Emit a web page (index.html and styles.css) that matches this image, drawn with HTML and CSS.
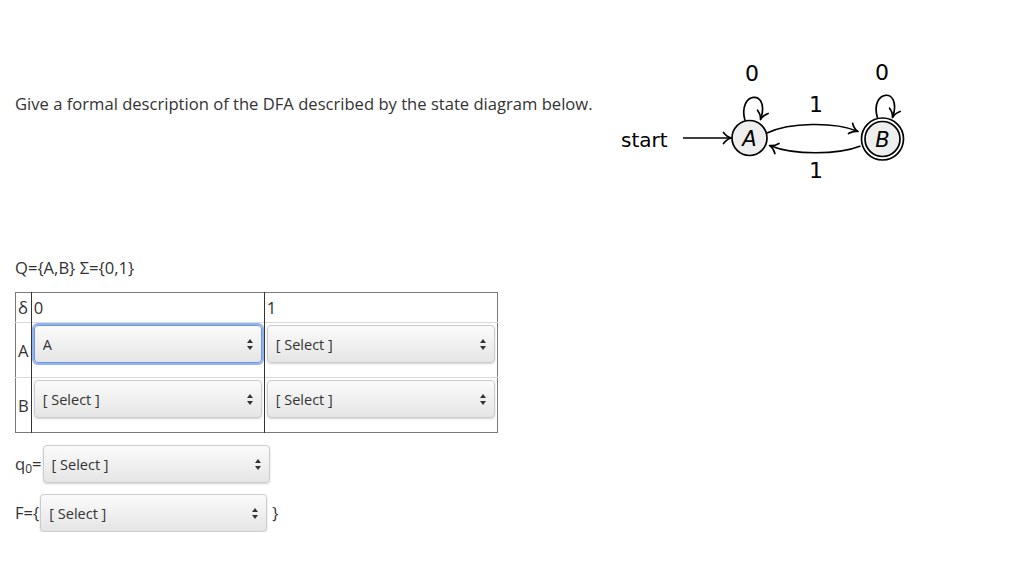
FILE: index.html
```html
<!DOCTYPE html>
<html lang="en">
<head>
<meta charset="utf-8">
<title>DFA formal description</title>
<link rel="stylesheet" href="styles.css">
</head>
<body>
<div class="page">
  <div class="intro">
    <p class="prompt">Give a formal description of the DFA described by the state diagram below.</p>
    <svg class="diagram" viewBox="612 55 300 135" width="300" height="135" xmlns="http://www.w3.org/2000/svg">
      <defs>
        <path id="tip" d="M-8 -5.5 C-5.5 -2.2 -2.6 -0.5 0 0 C-2.6 0.5 -5.5 2.2 -8 5.5" fill="none" stroke="#000" stroke-width="1.7" stroke-linecap="round" stroke-linejoin="round"/>
      </defs>
      <g class="dg-text">
        <text x="621" y="147">start</text>
      </g>
      <g class="dg-num">
        <text x="752" y="81" text-anchor="middle">0</text>
        <text x="882" y="80" text-anchor="middle">0</text>
        <text x="816" y="112" text-anchor="middle">1</text>
        <text x="816" y="178" text-anchor="middle">1</text>
      </g>
      <g fill="none" stroke="#000" stroke-width="1.7">
        <line x1="683" y1="138" x2="730.5" y2="138"/>
        <circle cx="749.5" cy="138" r="17.5" fill="#eeeeee"/>
        <circle cx="882.5" cy="139" r="21"/>
        <circle cx="882.5" cy="139" r="17.5" fill="#eeeeee"/>
        <path d="M745 120.5 C737 92 770 88 761 118.5"/>
        <path d="M877.5 118 C869 90 902 86 893 116.5"/>
        <path d="M767 133 C790 122 835 122 857 131"/>
        <path d="M860.5 146 C838 155 793 155 771 146"/>
      </g>
      <use href="#tip" transform="translate(731.5 138)"/>
      <use href="#tip" transform="translate(760.5 119.5) rotate(107)"/>
      <use href="#tip" transform="translate(892.5 117.5) rotate(107)"/>
      <use href="#tip" transform="translate(858 131.5) rotate(22)"/>
      <use href="#tip" transform="translate(769.5 145.5) rotate(202)"/>
      <g class="dg-state">
        <text x="749.5" y="145.5" text-anchor="middle">A</text>
        <text x="882.5" y="146.5" text-anchor="middle">B</text>
      </g>
    </svg>
  </div>

  <p class="sets">Q={A,B} Σ={0,1}</p>

  <table class="delta">
    <tr class="head">
      <td class="lbl">δ</td>
      <td>0</td>
      <td>1</td>
    </tr>
    <tr>
      <td class="lbl">A</td>
      <td>
        <span class="sel focus">
          <select><option>A</option></select>
          <svg class="arrows" viewBox="0 0 6 11" width="6" height="11"><path d="M3 0 L6 4 L0 4 Z M0 7 L6 7 L3 11 Z" fill="#333"/></svg>
        </span>
      </td>
      <td>
        <span class="sel">
          <select><option>[ Select ]</option></select>
          <svg class="arrows" viewBox="0 0 6 11" width="6" height="11"><path d="M3 0 L6 4 L0 4 Z M0 7 L6 7 L3 11 Z" fill="#333"/></svg>
        </span>
      </td>
    </tr>
    <tr>
      <td class="lbl">B</td>
      <td>
        <span class="sel">
          <select><option>[ Select ]</option></select>
          <svg class="arrows" viewBox="0 0 6 11" width="6" height="11"><path d="M3 0 L6 4 L0 4 Z M0 7 L6 7 L3 11 Z" fill="#333"/></svg>
        </span>
      </td>
      <td>
        <span class="sel">
          <select><option>[ Select ]</option></select>
          <svg class="arrows" viewBox="0 0 6 11" width="6" height="11"><path d="M3 0 L6 4 L0 4 Z M0 7 L6 7 L3 11 Z" fill="#333"/></svg>
        </span>
      </td>
    </tr>
  </table>

  <div class="line q0">
    <span class="lead">q<sub>0</sub>=</span>
    <span class="sel">
      <select><option>[ Select ]</option></select>
      <svg class="arrows" viewBox="0 0 6 11" width="6" height="11"><path d="M3 0 L6 4 L0 4 Z M0 7 L6 7 L3 11 Z" fill="#333"/></svg>
    </span>
  </div>
  <div class="line fset">
    <span class="lead">F={</span>
    <span class="sel">
      <select><option>[ Select ]</option></select>
      <svg class="arrows" viewBox="0 0 6 11" width="6" height="11"><path d="M3 0 L6 4 L0 4 Z M0 7 L6 7 L3 11 Z" fill="#333"/></svg>
    </span>
    <span class="trail">}</span>
  </div>
</div>
</body>
</html>
```

FILE: styles.css
```css
html, body {
  margin: 0;
  padding: 0;
  background: #ffffff;
}

body {
  font-family: "Open Sans", "Liberation Sans", sans-serif;
  font-size: 16.6px;
  color: #333333;
}

.page {
  padding-left: 15px;
}

.intro {
  display: flex;
  align-items: flex-start;
  height: 190px;
}

.prompt {
  margin: 92px 0 0 0;
  width: 597px;
  line-height: 24px;
}

.diagram {
  margin-top: 55px;
  display: block;
}

.dg-text text {
  font-family: "DejaVu Sans", sans-serif;
  font-size: 20px;
  fill: #000;
}

.dg-num text {
  font-family: "DejaVu Sans", sans-serif;
  font-size: 22px;
  fill: #000;
}

.dg-state text {
  font-family: "DejaVu Sans", sans-serif;
  font-size: 21px;
  font-style: italic;
  fill: #000;
}

.sets {
  margin: 66px 0 0 0;
  line-height: 24px;
}

.delta {
  margin-top: 12px;
  border-collapse: collapse;
  border: 1px solid #7a7a7a;
}

.delta td {
  padding: 2px;
  border-left: 1px solid #333333;
  border-top: 1px solid #d9d9d9;
  line-height: 25px;
  vertical-align: middle;
}

.delta td.lbl {
  padding: 2px 2px 2px 2px;
  border-left: none;
}

.delta tr.head td {
  border-top: none;
}

.sel {
  position: relative;
  display: block;
  width: 228px;
  height: 38px;
  margin-bottom: 12px;
}

.sel select {
  -webkit-appearance: none;
  appearance: none;
  box-sizing: border-box;
  width: 100%;
  height: 100%;
  margin: 0;
  padding: 0 8px;
  border: 1px solid #cccccc;
  border-radius: 4px;
  background: linear-gradient(#fbfbfb, #e5e5e5);
  box-shadow: 0 1px 2px rgba(0, 0, 0, 0.18);
  font-family: "Open Sans", "Liberation Sans", sans-serif;
  font-size: 14.5px;
  color: #333333;
  outline: none;
}

.sel.focus select {
  border-color: #6d97e3;
  box-shadow: 0 0 0 2px #93b3ef;
}

.sel .arrows {
  position: absolute;
  right: 9px;
  top: 14px;
}

.line {
  display: flex;
  align-items: center;
  height: 38px;
}

.line .sel {
  margin-bottom: 0;
  width: 227px;
}

.line .lead {
  line-height: 24px;
}

.line sub {
  font-size: 12px;
  vertical-align: -3px;
  line-height: 0;
}

.q0 {
  margin-top: 12px;
}

.q0 .sel {
  margin-left: 1px;
}

.fset {
  margin-top: 11px;
}

.fset .sel {
  margin-left: 1px;
}

.trail {
  margin-left: 5px;
  line-height: 24px;
}
```
